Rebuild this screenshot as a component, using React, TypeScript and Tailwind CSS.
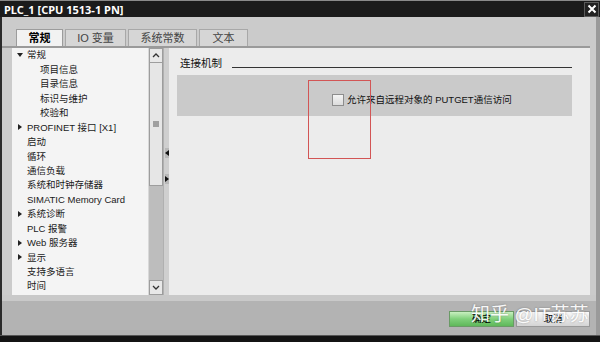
import React from 'react';

type TreeItem = {
  label: string;
  level: 1 | 2;
  arrow?: 'down' | 'right';
};

const treeItems: TreeItem[] = [
  { label: '常规', level: 1, arrow: 'down' },
  { label: '项目信息', level: 2 },
  { label: '目录信息', level: 2 },
  { label: '标识与维护', level: 2 },
  { label: '校验和', level: 2 },
  { label: 'PROFINET 接口 [X1]', level: 1, arrow: 'right' },
  { label: '启动', level: 1 },
  { label: '循环', level: 1 },
  { label: '通信负载', level: 1 },
  { label: '系统和时钟存储器', level: 1 },
  { label: 'SIMATIC Memory Card', level: 1 },
  { label: '系统诊断', level: 1, arrow: 'right' },
  { label: 'PLC 报警', level: 1 },
  { label: 'Web 服务器', level: 1, arrow: 'right' },
  { label: '显示', level: 1, arrow: 'right' },
  { label: '支持多语言', level: 1 },
  { label: '时间', level: 1 },
];

const tabs = [
  { label: '常规', width: 'w-[47px]', active: true },
  { label: 'IO 变量', width: 'w-[61px]', active: false },
  { label: '系统常数', width: 'w-[69px]', active: false },
  { label: '文本', width: 'w-[49px]', active: false },
];

const font = { fontFamily: '"Liberation Sans", "Noto Sans CJK SC", sans-serif' };

const Arrow: React.FC<{ dir: 'down' | 'right' }> = ({ dir }) => (
  <svg width="6" height="6" viewBox="0 0 6 6" className="shrink-0">
    {dir === 'down' ? <path d="M0 1 L6 1 L3 5 Z" fill="#222" /> : <path d="M1 0 L5 3 L1 6 Z" fill="#222" />}
  </svg>
);

const App: React.FC = () => {
  return (
    <div className="w-[600px] h-[342px] flex flex-col overflow-hidden bg-[#cbcbcb] relative" style={font}>
      {/* Title bar */}
      <div className="h-[17px] shrink-0 flex items-center justify-between bg-[#1b1b1b] border-t border-[#8a8a8a]">
        <span
          className="pl-[4px] text-[11px] font-bold text-white leading-none"
          style={{ fontFamily: '"Noto Sans", sans-serif' }}
        >
          PLC_1 [CPU 1513-1 PN]
        </span>
        <div className="w-[15px] h-[15px] mr-[1px] flex items-center justify-center border border-[#5a5a5a] bg-[#222]">
          <svg width="10" height="10" viewBox="0 0 10 10">
            <path d="M1.5 1.5 L8.5 8.5 M8.5 1.5 L1.5 8.5" stroke="#fff" strokeWidth="2" />
          </svg>
        </div>
      </div>

      {/* Body */}
      <div className="flex-1 flex flex-col border-l-2 border-[#2a2a2a] border-r-[4px] border-r-[#9a9a9a]">
        {/* Tabs */}
        <div className="h-[29px] shrink-0 flex items-end pl-[14px] gap-[2px]">
          {tabs.map((t) => (
            <div
              key={t.label}
              className={`${t.width} h-[17px] flex items-center justify-center text-[11px] leading-none border border-b-0 ${
                t.active
                  ? 'bg-[#f2f2f2] border-[#9c9c9c] text-black font-bold'
                  : 'bg-[#d6d6d6] border-[#a8a8a8] text-[#444]'
              }`}
            >
              {t.label}
            </div>
          ))}
        </div>
        <div className="h-[2px] shrink-0 bg-[#9a9a9a] mr-[6px]" />

        {/* Content */}
        <div className="h-[247px] shrink-0 flex ml-[10px] mr-[6px]">
          {/* Tree */}
          <div className="w-[136px] bg-[#f4f4f4] flex flex-col">
            {treeItems.map((item) => (
              <div
                key={item.label}
                className={`h-[14.44px] flex items-center text-[9.5px] leading-none text-[#1a1a1a] ${
                  item.level === 2 ? 'pl-[18px]' : 'pl-[5px]'
                }`}
              >
                <span className="w-[10px] flex items-center">{item.arrow && <Arrow dir={item.arrow} />}</span>
                <span>{item.label}</span>
              </div>
            ))}
          </div>

          {/* Scrollbar */}
          <div className="w-[15px] flex flex-col bg-[#bdbdbd] border-l border-[#d8d8d8]">
            <div className="h-[15px] flex items-center justify-center bg-[#e8e8e8] border border-[#9d9d9d]">
              <svg width="8" height="5" viewBox="0 0 8 5">
                <path d="M1 4 L4 1 L7 4" stroke="#333" strokeWidth="1.3" fill="none" />
              </svg>
            </div>
            <div className="h-[123px] flex items-center justify-center bg-[#e6e6e6] border border-t-0 border-[#9d9d9d]">
              <div className="w-[6px] h-[6px] bg-[#a0a0a0]" />
            </div>
            <div className="flex-1" />
            <div className="h-[15px] flex items-center justify-center bg-[#e8e8e8] border border-[#9d9d9d]">
              <svg width="8" height="5" viewBox="0 0 8 5">
                <path d="M1 1 L4 4 L7 1" stroke="#333" strokeWidth="1.3" fill="none" />
              </svg>
            </div>
          </div>

          {/* Splitter */}
          <div className="w-[6px] bg-[#cfcfcf] border-l border-[#b0b0b0] flex flex-col items-center pt-[100px] gap-[16px]">
            <div className="w-[4px] h-[10px] bg-[#b8b8b8] flex items-center justify-center">
              <svg width="4" height="6" viewBox="0 0 4 6">
                <path d="M4 0 L0 3 L4 6 Z" fill="#111" />
              </svg>
            </div>
            <div className="w-[4px] h-[10px] bg-[#b8b8b8] flex items-center justify-center">
              <svg width="4" height="6" viewBox="0 0 4 6">
                <path d="M0 0 L4 3 L0 6 Z" fill="#111" />
              </svg>
            </div>
          </div>

          {/* Right panel */}
          <div className="flex-1 bg-[#ececec] pl-[8px] pr-[18px] pt-[8px]">
            <div className="flex items-center h-[14px] pl-[3px]">
              <span className="text-[10.5px] leading-none text-[#111]">连接机制</span>
              <div className="flex-1 ml-[10px] mt-[9px] h-px bg-[#333]" />
            </div>
            <div className="mt-[5px] h-[41px] bg-[#cacaca] flex items-center pl-[155px] pt-[9px]">
              <div className="w-[12px] h-[12px] border border-[#8d8d8d] bg-gradient-to-b from-[#f4f4f4] to-[#dcdcdc]" />
              <span className="ml-[3px] text-[9.5px] leading-none text-[#111] whitespace-nowrap">
                允许来自远程对象的 PUTGET通信访问
              </span>
            </div>
          </div>
        </div>

        {/* Footer */}
        <div className="flex-1 flex flex-col">
          <div className="h-[6px] bg-[#c9c9c9]" />
          <div className="flex-1 bg-[#b3b3b3] flex justify-end items-start pt-[10px] pr-[6px] gap-[2px]">
            <div className="w-[65px] h-[16px] flex items-center justify-center text-[9.5px] text-black bg-gradient-to-b from-[#c8f0c0] via-[#7fd07a] to-[#5fb85a] border border-[#6a9a66]">
              确定
            </div>
            <div className="w-[74px] h-[16px] flex items-center justify-center text-[9.5px] text-black bg-gradient-to-b from-[#fafafa] to-[#d4d4d4] border border-[#999]">
              取消
            </div>
          </div>
        </div>
      </div>
      <div className="h-[7px] shrink-0 bg-[#141414] border-t border-[#555]" />

      {/* Red highlight */}
      <div className="absolute left-[308px] top-[80px] w-[63px] h-[79px] border border-[#d25555]" />

      {/* Watermark */}
      <div className="absolute left-[471px] top-[305px] whitespace-nowrap text-[19px] leading-none text-white opacity-90 [text-shadow:0_0_2px_rgba(0,0,0,0.35)]">
        知乎 @IT苏苏
      </div>
    </div>
  );
};

export default App;
